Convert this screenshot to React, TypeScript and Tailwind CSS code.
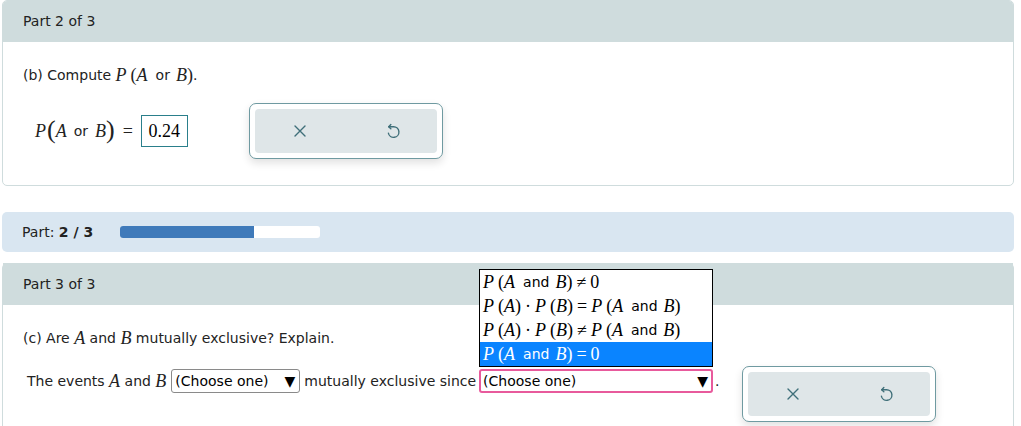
import React from 'react';

const sans = { fontFamily: '"DejaVu Sans", Verdana, sans-serif' };

const M: React.FC<{ children: React.ReactNode }> = ({ children }) => (
  <span className="font-['Liberation_Serif',serif] italic text-[18px]">{children}</span>
);
const R: React.FC<{ children: React.ReactNode }> = ({ children }) => (
  <span className="font-['Liberation_Serif',serif] text-[18px]">{children}</span>
);

const XIcon = () => (
  <svg width="14" height="14" viewBox="0 0 14 14" fill="none" stroke="#3f6f79" strokeWidth="1.4" strokeLinecap="round">
    <path d="M2 2L12 12M12 2L2 12" />
  </svg>
);

const UndoIcon = () => (
  <svg width="15" height="17" viewBox="0 0 14 16" fill="none" stroke="#3f6f79" strokeWidth="1.3" strokeLinecap="round" strokeLinejoin="round">
    <path d="M4.5 1.5L2.5 3.5L4.5 5.5" />
    <path d="M2.5 3.5H7A5 5 0 1 1 2.2 9.5" />
  </svg>
);

const ButtonGroup: React.FC = () => (
  <div className="w-[194px] h-[56px] rounded-[7px] border border-[#6f9aa1] bg-white p-[5px] shadow-[0_4px_8px_rgba(0,0,0,0.12)]">
    <div className="flex h-full items-center rounded-[4px] bg-[#dfe6e8]">
      <button className="flex w-1/2 items-center justify-center"><XIcon /></button>
      <button className="flex w-1/2 items-center justify-center pl-[4px]"><UndoIcon /></button>
    </div>
  </div>
);

const Option: React.FC<{ active?: boolean; children: React.ReactNode }> = ({ active, children }) => (
  <div className={`h-[24px] flex items-center pl-[3px] whitespace-nowrap ${active ? 'bg-[#0a84ff] text-white' : 'text-black'}`}>
    {children}
  </div>
);

const and = <span className="text-[14px] pl-[8px] pr-[6px]">and</span>;
const sp = <span className="inline-block w-[4px]" />;

export default function App() {
  return (
    <div className="w-[1021px] h-[426px] overflow-hidden bg-white text-[14px] text-[#222]" style={sans}>
      <div className="ml-[2px] mr-[7px]">
        {/* Part 2 */}
        <div className="rounded-[5px] border border-[#cfdcdd] overflow-hidden">
          <div className="h-[42px] bg-[#cfdcdd] flex items-center pl-[20px] -mt-px">Part 2 of 3</div>
          <div className="pl-[20px] pt-[23px] pb-[26px]">
            <div className="h-[20px] flex items-center">
              (b) Compute&nbsp;<M>P</M>{sp}<R>(</R><M>A</M><span className="pl-[8px] pr-[6px]">or</span><M>B</M><R>)</R>.
            </div>
            <div className="mt-[18px] flex items-center h-[56px]">
              <div className="ml-[12px] flex items-center">
                <M>P</M>
                <span className="font-['Liberation_Serif',serif] text-[26px] leading-none -mt-[3px] ml-[1px]">(</span>
                <M>A</M>
                <span className="px-[7px]">or</span>
                <M>B</M>
                <span className="font-['Liberation_Serif',serif] text-[26px] leading-none -mt-[3px]">)</span>
                <span className="font-['Liberation_Serif',serif] text-[18px] px-[8px]">=</span>
                <div className="h-[32px] w-[47px] border border-[#2a7f8b] flex items-center justify-center font-['Liberation_Serif',serif] text-[18px] text-black">
                  0.24
                </div>
              </div>
              <div className="ml-[61px]"><ButtonGroup /></div>
            </div>
          </div>
        </div>

        {/* progress */}
        <div className="mt-[26px] h-[40px] rounded-[5px] bg-[#d9e6f1] flex items-center pl-[20px]">
          <span>Part: <b>2 / 3</b></span>
          <div className="ml-[27px] w-[200px] h-[12px] rounded-[3px] bg-white overflow-hidden">
            <div className="h-full bg-[#3f7aba]" style={{ width: '67%' }} />
          </div>
        </div>

        {/* Part 3 */}
        <div className="mt-[11px] rounded-[5px] border border-[#cfdcdd] h-[200px]">
          <div className="h-[42px] bg-[#cfdcdd] flex items-center pl-[20px] -mt-px">Part 3 of 3</div>
          <div className="pl-[20px] pt-[23px]">
            <div className="h-[20px] flex items-center">
              (c) Are&nbsp;<M>A</M>&nbsp;and&nbsp;<M>B</M>&nbsp;mutually exclusive? Explain.
            </div>
            <div className="mt-[18px] flex items-start pl-[4px]">
              <div className="mt-[3px] h-[24px] flex items-center">
                The events&nbsp;<M>A</M>&nbsp;and&nbsp;<M>B</M>
              </div>
              <div className="mt-[3px] ml-[5px] h-[24px] w-[129px] rounded-[3px] border border-[#8a8a8a] flex items-center pl-[3px] pr-[4px] justify-between text-black">
                <span>(Choose one)</span><span className="text-[14px]">▼</span>
              </div>
              <div className="mt-[3px] h-[24px] flex items-center pl-[4px] pr-[3px]">mutually exclusive since</div>
              <div className="relative mt-[3px]">
                <div className="absolute bottom-[26px] left-0 w-[234px] border border-black bg-white">
                  <Option><M>P</M>{sp}<R>(</R><M>A</M>{and}<M>B</M><R>)</R>{sp}<R>≠</R>{sp}<R>0</R></Option>
                  <Option><M>P</M>{sp}<R>(</R><M>A</M><R>)</R>{sp}<R>·</R>{sp}<M>P</M>{sp}<R>(</R><M>B</M><R>)</R>{sp}<R>=</R>{sp}<M>P</M>{sp}<R>(</R><M>A</M>{and}<M>B</M><R>)</R></Option>
                  <Option><M>P</M>{sp}<R>(</R><M>A</M><R>)</R>{sp}<R>·</R>{sp}<M>P</M>{sp}<R>(</R><M>B</M><R>)</R>{sp}<R>≠</R>{sp}<M>P</M>{sp}<R>(</R><M>A</M>{and}<M>B</M><R>)</R></Option>
                  <Option active><M>P</M>{sp}<R>(</R><M>A</M>{and}<M>B</M><R>)</R>{sp}<R>=</R>{sp}<R>0</R></Option>
                </div>
                <div className="h-[24px] w-[234px] rounded-[3px] border-2 border-[#e85a9c] flex items-center pl-[2px] pr-[3px] justify-between text-black">
                  <span>(Choose one)</span><span>▼</span>
                </div>
              </div>
              <div className="mt-[3px] h-[24px] flex items-center pl-[2px]">.</div>
              <div className="ml-[22px]"><ButtonGroup /></div>
            </div>
          </div>
        </div>
      </div>
    </div>
  );
}
